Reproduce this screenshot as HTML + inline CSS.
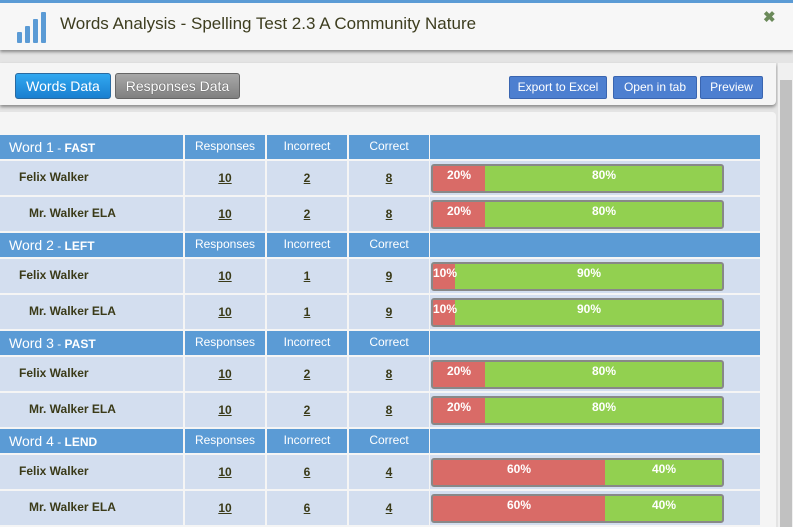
<!DOCTYPE html>
<html><head><style>
*{margin:0;padding:0;box-sizing:border-box}
body{width:793px;height:527px;overflow:hidden;background:#e4e4e4;font-family:"Liberation Sans",Arial,sans-serif;position:relative}
.abs{position:absolute}
.hdr{left:0;top:0;width:793px;height:50px;background:#f7f7f7;border-top:3px solid #5b9bd5;box-shadow:0 2px 3px #888}
.title{left:60px;top:14px;font-size:17px;color:#3d3d1f}
.x{left:763px;top:8px;font-size:15px;font-weight:bold;color:#6b8a5a}
.tb{left:0;top:63px;width:776px;height:42px;background:#f5f5f5;box-shadow:0 2px 3px #888;border-radius:0 0 4px 0}
.btn{position:absolute;top:10px;height:26px;border-radius:3px;color:#fff;font-size:14px;text-align:center;line-height:24px}
.b1{left:15px;width:96px;background:linear-gradient(#32a8f0,#1a7fd0);border:1px solid #2a6aa0}
.b2{left:115px;width:125px;background:linear-gradient(#a8a8a8,#808080);border:1px solid #666;text-shadow:0 0 1px #333}
.sb{position:absolute;top:13px;height:23px;background:#4d7fd0;border:1px solid #3a65b0;border-radius:2px;color:#fff;font-size:12px;text-align:center;line-height:21px}
.cont{left:0;top:112px;width:776px;height:415px;background:#f5f5f5;border-radius:0 4px 0 0}
.scr{left:778px;top:63px;width:15px;height:464px;background:#f0f0f0}
.thumb{left:780px;top:80px;width:12px;height:447px;background:#c1c1c1}
.c{position:absolute;background:#d3deef;font-size:12px;font-weight:bold;color:#3a3a18;text-align:center}
.h{background:#5b9bd5;color:#fff;font-weight:normal}
.u{text-decoration:underline}
.bar{position:absolute;left:431px;width:293px;height:29px;border:2px solid #888;border-radius:3px;background:#92d050;overflow:hidden}
.bar div{position:absolute;top:0;height:100%;color:#fff;font-size:12px;font-weight:bold;text-align:center;line-height:18px}
.r{background:#d96b67;left:0}
</style></head><body>
<div class="abs hdr"></div>
<svg class="abs" style="left:16px;top:10px" width="32" height="34" viewBox="0 0 32 34"><g fill="#5b9bd5"><rect x="1" y="22" width="5" height="11" rx="1"/><rect x="9" y="16" width="5" height="17" rx="1"/><rect x="17" y="9" width="5" height="24" rx="1"/><rect x="25" y="2" width="5" height="31" rx="1"/></g></svg>
<div class="abs title">Words Analysis - Spelling Test 2.3 A Community Nature</div>
<div class="abs x">✖</div>
<div class="abs tb">
<div class="btn b1">Words Data</div><div class="btn b2">Responses Data</div>
<div class="sb" style="left:509px;width:98px">Export to Excel</div>
<div class="sb" style="left:613px;width:84px">Open in tab</div>
<div class="sb" style="left:700px;width:63px">Preview</div>
</div>
<div class="abs cont"></div>
<div class="abs scr"></div><div class="abs thumb"></div>
<div id="t"></div>
<script>
var d=[["1 - FAST",2,8],["2 - LEFT",1,9],["3 - PAST",2,8],["4 - LEND",6,4]];
var rw={1:22,2:52,6:172};
var h="";
d.forEach(function(w,i){var y=135+i*98;
h+='<div class="c h" style="left:0;top:'+y+'px;width:183px;height:24px;text-align:left;padding-left:9px;line-height:25px"><span style="font-size:14px">Word '+w[0].split(" - ")[0]+'</span> - <b>'+w[0].split(" - ")[1]+'</b></div>';
[["Responses",185],["Incorrect",267],["Correct",349]].forEach(function(c){h+='<div class="c h" style="left:'+c[1]+'px;top:'+y+'px;width:80px;height:24px;line-height:22px">'+c[0]+'</div>';});
h+='<div class="c h" style="left:430px;top:'+y+'px;width:330px;height:24px"></div>';
["Felix Walker","Mr. Walker ELA"].forEach(function(n,j){var ry=y+26+j*36;
h+='<div class="c" style="left:0;top:'+ry+'px;width:183px;height:34px;line-height:33px;text-align:left;padding-left:'+(j?29:19)+'px">'+n+'</div>';
[[10,185],[w[1],267],[w[2],349]].forEach(function(c){h+='<div class="c" style="left:'+c[1]+'px;top:'+ry+'px;width:80px;height:34px;line-height:35px"><span class="u">'+c[0]+'</span></div>';});
h+='<div class="c" style="left:430px;top:'+ry+'px;width:330px;height:34px"></div>';
var r=rw[w[1]];
h+='<div class="bar" style="top:'+(ry+3)+'px"><div class="r" style="width:'+r+'px">'+(w[1]*10)+'%</div><div style="left:'+(r+1)+'px;right:0">'+(w[2]*10)+'%</div></div>';
});});
document.getElementById("t").innerHTML=h;
</script>
</body></html>
